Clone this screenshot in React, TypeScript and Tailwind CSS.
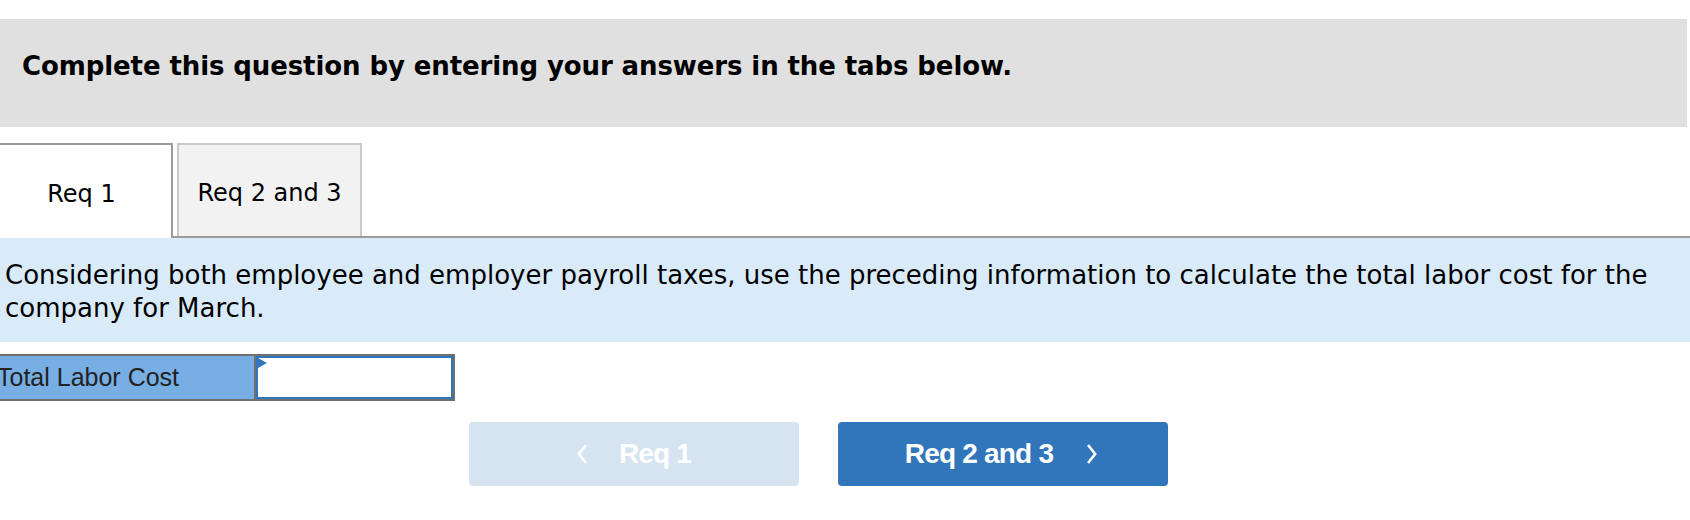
import React from "react";

function Chevron({ dir }: { dir: "left" | "right" }) {
  return (
    <svg viewBox="0 0 10 20" className="h-[20px] w-[10px]" fill="none" stroke="currentColor" strokeWidth={2.6}>
      {dir === "left" ? <polyline points="9,1 1.8,10 9,19" /> : <polyline points="1,1 8.2,10 1,19" />}
    </svg>
  );
}

export default function App() {
  return (
    <div className="h-[520px] w-[1690px] overflow-hidden bg-white font-['DejaVu_Sans',Verdana,sans-serif] text-black">
      {/* instructions band */}
      <div className="mt-[19px] h-[108px] w-[1687px] bg-[#e0e0e0] pl-[22px] pt-[31px] text-[26px] font-bold leading-[32px] tracking-[-0.1px]">
        Complete this question by entering your answers in the tabs below.
      </div>

      {/* tabs */}
      <div className="mt-[16px] flex items-end">
        <div className="-ml-[2px] flex h-[95px] w-[175px] items-center justify-center border-2 border-b-0 border-[#9b9b9b] bg-white pr-[8px] pt-[4px] text-[24px]">
          Req 1
        </div>
        <div className="flex flex-1 border-b-2 border-[#9b9b9b]">
          <div className="ml-[4px] flex h-[93px] w-[185px] items-center justify-center border-2 border-b-0 border-[#c9c9c9] bg-[#f2f2f2] pt-[4px] text-[24px]">
            Req 2 and 3
          </div>
        </div>
      </div>

      {/* question */}
      <div className="h-[104px] bg-[#d9eaf8] px-[5px] pt-[21px] text-[26px] leading-[33px]">
        Considering both employee and employer payroll taxes, use the preceding information to calculate the total labor cost for the company for March.
      </div>

      {/* answer row */}
      <div className="mt-[12px] flex h-[47px] w-[457px] -ml-[2px] border-2 border-[#6f6f6f]">
        <div className="flex w-[256px] items-center overflow-hidden border-r-2 border-[#6f6f6f] bg-[#77aee4] font-['Liberation_Sans',Arial,sans-serif] text-[25px] text-[#222]">
          <span className="-ml-[3px] whitespace-nowrap">Total Labor Cost</span>
        </div>
        <div className="relative flex-1 border-2 border-[#3176bb] bg-white">
          <div className="absolute left-0 top-0 h-0 w-0 border-y-[5px] border-l-[9px] border-y-transparent border-l-[#3176bb]" />
        </div>
      </div>

      {/* nav buttons */}
      <div className="mt-[21px] flex pl-[469px] font-['Liberation_Sans',Arial,sans-serif] text-[28px] font-bold tracking-[-0.8px] text-white">
        <div className="flex h-[64px] w-[330px] items-center justify-center gap-[32px] rounded-[4px] bg-[#d6e4f1]">
          <Chevron dir="left" />
          <span>Req 1</span>
        </div>
        <div className="ml-[39px] flex h-[64px] w-[330px] items-center justify-center gap-[34px] rounded-[4px] bg-[#3176bb] pr-[4px]">
          <span>Req 2 and 3</span>
          <Chevron dir="right" />
        </div>
      </div>
    </div>
  );
}
